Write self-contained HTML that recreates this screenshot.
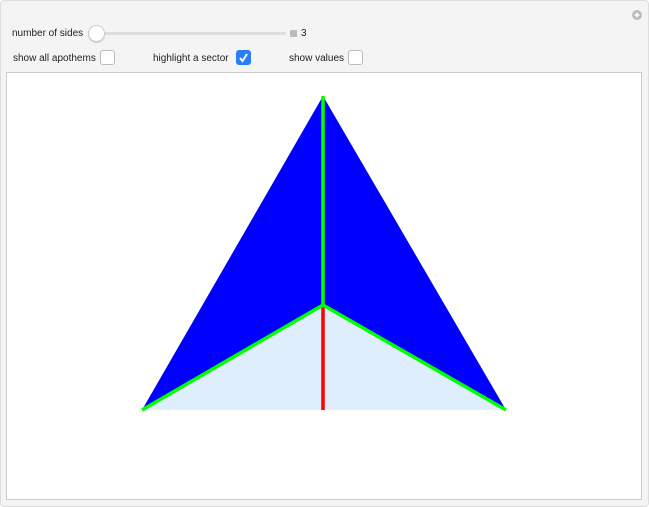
<!DOCTYPE html>
<html><head><style>
body{margin:0;width:649px;height:507px;background:#fff;font-family:"Liberation Sans",sans-serif;font-size:10px;color:#222;position:relative;overflow:hidden}
.panel{position:absolute;left:0;top:0;width:647px;height:505px;background:#f4f4f4;border:1px solid #ddd;border-radius:4px}
.t{position:absolute}
.cb{position:absolute;width:13px;height:13px;border:1px solid #bbb;border-radius:3px;background:#fff}
</style></head><body>
<div class="panel"></div>
<div class="t" style="left:12px;top:28px">number of sides</div>
<div style="position:absolute;left:88px;top:32px;width:198px;height:3px;background:#ddd;border-radius:2px"></div>
<div style="position:absolute;left:88px;top:25px;width:15px;height:15px;border-radius:50%;background:#fff;border:1px solid #ccc;box-shadow:0 1px 1px rgba(0,0,0,.15)"></div>
<div style="position:absolute;left:290px;top:30px;width:7px;height:7px;background:#bbb;border-radius:1px"></div>
<div class="t" style="left:301px;top:28px">3</div>
<div class="t" style="left:13px;top:53px">show all apothems</div>
<div class="cb" style="left:100px;top:50px"></div>
<div class="t" style="left:153px;top:53px">highlight a sector</div>
<div class="cb" style="left:236px;top:50px;background:#2a7ef5;border-color:#2a7ef5"><svg width="13" height="13" style="position:absolute;left:0;top:0"><path d="M3 7 L5.5 10 L10 3" stroke="#fff" stroke-width="2" fill="none"/></svg></div>
<div class="t" style="left:289px;top:53px">show values</div>
<div class="cb" style="left:348px;top:50px"></div>
<svg width="12" height="12" style="position:absolute;left:631px;top:9px"><circle cx="6" cy="6" r="5" fill="#bbb"/><path d="M6 3.5V8.5M3.5 6H8.5" stroke="#fff" stroke-width="1.5"/></svg>
<div style="position:absolute;left:6px;top:72px;width:634px;height:426px;background:#fff;border:1px solid #ccc"></div>
<svg width="649" height="507" style="position:absolute;left:0;top:0">
<polygon points="142,410 323,305 506,410" fill="#dfeefc"/>
<polygon points="323,96 142,410 323,305" fill="#0000ff"/>
<polygon points="323,96 323,305 506,410" fill="#0000ff"/>
<line x1="323" y1="305" x2="323" y2="410" stroke="#ff0000" stroke-width="3.5"/>
<path d="M323 96 L323 305 M142 410 L323 305 L506 410" stroke="#00ff00" stroke-width="3.5" fill="none"/>
</svg>
</body></html>
